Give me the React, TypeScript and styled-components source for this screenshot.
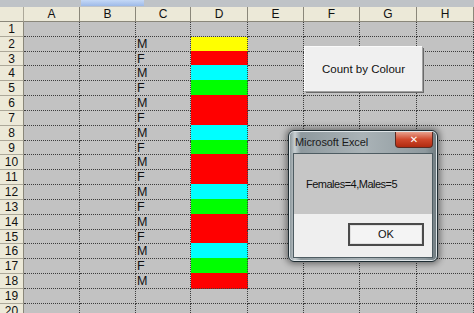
import styled, { createGlobalStyle } from "styled-components";

const GlobalStyle = createGlobalStyle`
  *, *::before, *::after {
    box-sizing: border-box;
  }
  html, body {
    margin: 0;
    padding: 0;
    background: #c2c2c2;
    overflow: hidden;
  }
`;

const COLUMNS = ["A", "B", "C", "D", "E", "F", "G", "H"];
const WIDTHS = [56, 56, 55, 57, 56, 56, 57, 57];

// values in column C and fills in column D, rows 1..20
const SEX = ["", "M", "F", "M", "F", "M", "F", "M", "F", "M", "F", "M", "F", "M", "F", "M", "F", "M", "", ""];
const FILLS = [
  "", "#ffff00", "#ff0000", "#00ffff", "#00ff00",
  "#ff0000", "#ff0000", "#00ffff", "#00ff00", "#ff0000",
  "#ff0000", "#00ffff", "#00ff00", "#ff0000", "#ff0000",
  "#00ffff", "#00ff00", "#ff0000", "", "",
];

const App = () => {
  return (
    <Page>
      <GlobalStyle />
      <TopStrip>
        <TabPiece />
      </TopStrip>
      <Sheet>
        <Corner />
        {COLUMNS.map((c) => (
          <ColHead key={c}>{c}</ColHead>
        ))}
        {SEX.map((sex, i) => (
          <Row key={i}>
            <RowHead>{i + 1}</RowHead>
            <Cell />
            <Cell />
            <Cell>{sex}</Cell>
            <Cell $fill={FILLS[i]} $fillBelow={FILLS[i + 1]} />
            <Cell />
            <Cell />
            <Cell />
            <Cell />
          </Row>
        ))}
      </Sheet>

      <CountButton>Count by Colour</CountButton>

      <Dialog>
        <TitleBar>
          <Title>Microsoft Excel</Title>
          <CloseButton>✕</CloseButton>
        </TitleBar>
        <Client>
          <Message>Females=4,Males=5</Message>
          <ButtonArea>
            <OkButton>OK</OkButton>
          </ButtonArea>
        </Client>
      </Dialog>
    </Page>
  );
};
export default App;

const Page = styled.div`
  position: relative;
  width: 474px;
  height: 313px;
  overflow: hidden;
  font-family: "Liberation Sans", Arial, sans-serif;
  background: #c2c2c2;
`;

const TopStrip = styled.div`
  height: 7px;
  background: #bfc3c7;
  display: flex;
  padding-left: 81px;
`;

const TabPiece = styled.div`
  width: 63px;
  height: 6px;
  background: linear-gradient(#c4d8f6, #9ebae8);
`;

const Sheet = styled.div`
  display: grid;
  grid-template-columns: 24px ${WIDTHS.map((w) => `${w}px`).join(" ")};
  grid-template-rows: 15px;
  grid-auto-rows: 14.84px;
`;

const Row = styled.div`
  display: contents;
`;

const Corner = styled.div`
  background: #ece9d8;
  border-right: 1px solid #aca899;
  border-bottom: 1px solid #8a877a;
`;

const ColHead = styled.div`
  background: #ece9d8;
  border-right: 1px solid #8a877a;
  border-bottom: 1px solid #8a877a;
  font-size: 12px;
  line-height: 14px;
  text-align: center;
  color: #111;
`;

const RowHead = styled.div`
  background: #ece9d8;
  border-right: 1px solid #8a877a;
  border-bottom: 1px solid #aca899;
  font-size: 12px;
  line-height: 14px;
  text-align: center;
  color: #111;
`;

const Cell = styled.div<{ $fill?: string; $fillBelow?: string }>`
  background: ${(p) => p.$fill || "#c2c2c2"};
  border-right: 1px dotted #3c3c3c;
  border-bottom: ${(p) =>
    p.$fill && p.$fillBelow ? `1px solid ${p.$fillBelow}` : "1px dotted #3c3c3c"};
  font-size: 12.5px;
  line-height: 14px;
  padding-left: 1px;
  color: #111;
  overflow: hidden;
  white-space: nowrap;
`;

const CountButton = styled.div`
  position: absolute;
  left: 304px;
  top: 46px;
  width: 118px;
  height: 45px;
  display: flex;
  align-items: center;
  justify-content: center;
  background: #f0f0f0;
  border-top: 1px solid #fafafa;
  border-left: 1px solid #fafafa;
  box-shadow: 1px 1px 0 #a0a0a0, 2px 2px 0 #6a6a6a;
  font-size: 11.5px;
  color: #111;
`;

const Dialog = styled.div`
  position: absolute;
  left: 288px;
  top: 130px;
  width: 150px;
  height: 132px;
  border: 1px solid #1e2c32;
  border-radius: 6px;
  background: linear-gradient(
    90deg,
    #7f8b90 0%,
    #c9d0d3 4%,
    #8e999e 8%,
    #aab3b7 50%,
    #8e999e 92%,
    #6f7b80 100%
  );
  box-shadow: 0 0 6px 2px rgba(0, 0, 0, 0.45), inset 0 0 0 1px #dfe5e8;
  display: flex;
  flex-direction: column;
  padding: 0 4px 3px;
`;

const TitleBar = styled.div`
  height: 22px;
  display: flex;
  align-items: flex-start;
  justify-content: space-between;
`;

const Title = styled.span`
  margin-top: 5px;
  margin-left: 2px;
  font-size: 11px;
  letter-spacing: -0.1px;
  color: #1a1a1a;
`;

const CloseButton = styled.div`
  width: 38px;
  height: 16px;
  margin-top: 1px;
  border: 1px solid #5a2a22;
  border-top: none;
  border-radius: 0 0 4px 4px;
  background: linear-gradient(#e8a08c, #d0482c 50%, #b02a10);
  color: #fff;
  font-family: "DejaVu Sans", sans-serif;
  font-size: 10px;
  font-weight: bold;
  line-height: 15px;
  text-align: center;
`;

const Client = styled.div`
  flex: 1;
  display: flex;
  flex-direction: column;
  border: 1px solid #4e5c62;
`;

const Message = styled.div`
  height: 60px;
  background: #c6c6c6;
  display: flex;
  align-items: center;
  padding-left: 12px;
  font-size: 11px;
  letter-spacing: -0.5px;
  color: #111;
`;

const ButtonArea = styled.div`
  flex: 1;
  background: #efefef;
  display: flex;
  justify-content: flex-end;
  align-items: flex-start;
  padding: 9px 8px 0 0;
`;

const OkButton = styled.div`
  width: 76px;
  height: 23px;
  border: 2px solid #4a4a4a;
  background: #f4f4f4;
  box-shadow: inset 0 0 0 1px #e0e0e0;
  font-size: 11px;
  line-height: 19px;
  text-align: center;
  color: #111;
`;
